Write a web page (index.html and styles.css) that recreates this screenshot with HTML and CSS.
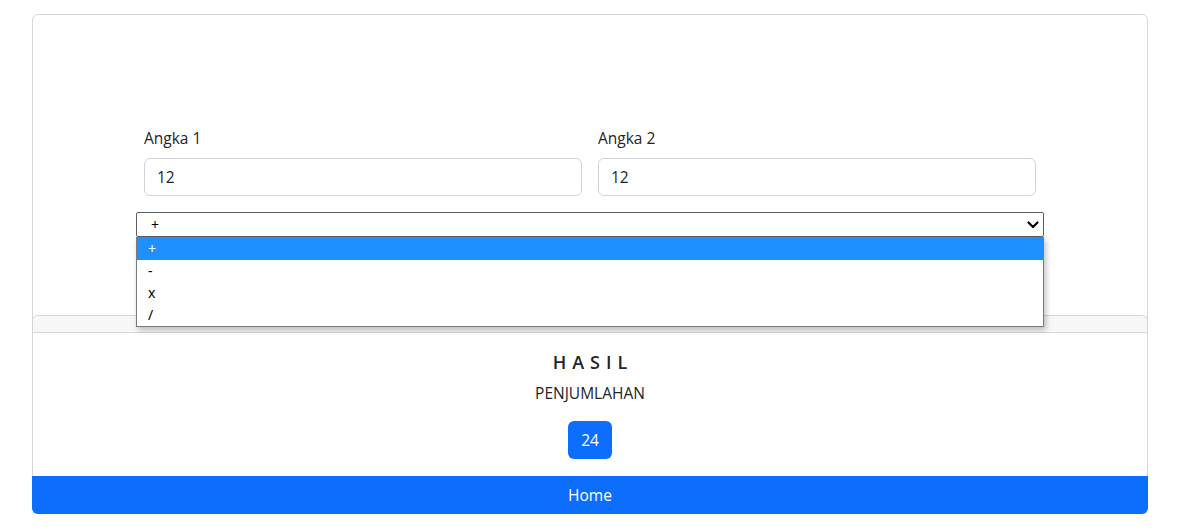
FILE: index.html
```html
<!DOCTYPE html>
<html lang="id">
<head>
<meta charset="utf-8">
<title>Kalkulator</title>
<link rel="stylesheet" href="styles.css">
</head>
<body>
<div class="page">
  <div class="card">
    <form class="calc">
      <div class="row">
        <div class="col">
          <label class="label" for="a1">Angka 1</label>
          <input class="input" id="a1" type="text" value="12">
        </div>
        <div class="col">
          <label class="label" for="a2">Angka 2</label>
          <input class="input" id="a2" type="text" value="12">
        </div>
      </div>
      <div class="select-wrap">
        <select class="select">
          <option>+</option>
          <option>-</option>
          <option>x</option>
          <option>/</option>
        </select>
        <svg class="chevron" width="12" height="8" viewBox="0 0 12 8"><path d="M1.5 1.5 L6 6 L10.5 1.5" fill="none" stroke="#000" stroke-width="2.2" stroke-linecap="round" stroke-linejoin="round"/></svg>
        <ul class="dropdown">
          <li class="opt active">+</li>
          <li class="opt">-</li>
          <li class="opt">x</li>
          <li class="opt">/</li>
        </ul>
      </div>
    </form>
    <div class="result">
      <div class="result-header"></div>
      <div class="result-body">
        <h5 class="title">HASIL</h5>
        <p class="op">PENJUMLAHAN</p>
        <span class="answer">24</span>
      </div>
    </div>
    <a class="home" href="#">Home</a>
  </div>
</div>
</body>
</html>
```

FILE: styles.css
```css
* { box-sizing: border-box; }
html, body { margin: 0; padding: 0; background: #fff; }
body {
  font-family: "Open Sans", "Noto Sans", Arial, sans-serif;
  font-size: 16px;
  line-height: 1.5;
  color: #212529;
}
.page { padding: 14px 32px 0 32px; }
.card {
  border: 1px solid #d6d6d6;
  border-radius: 6px;
  display: flex;
  flex-direction: column;
}
.calc { padding: 112px 103px 0 103px; }
.row { display: flex; }
.col { flex: 1 1 0; padding: 0 8px; }
.label { display: block; margin-bottom: 8px; font-size: 15.5px; }
.input {
  display: block;
  width: 100%;
  height: 38px;
  padding: 6px 12px;
  font: inherit;
  font-size: 15.5px;
  color: #212529;
  border: 1px solid #ced4da;
  border-radius: 6px;
  background: #fff;
}
.select-wrap { position: relative; margin-top: 16px; }
.select {
  display: block;
  width: 100%;
  height: 25px;
  appearance: none;
  -webkit-appearance: none;
  border: 1px solid #5f5f5f;
  border-radius: 2px;
  background: #fff;
  padding: 0 0 0 14px;
  font-family: "Noto Sans", Arial, sans-serif;
  font-size: 14px;
  color: #000;
}
.chevron { position: absolute; right: 5px; top: 9px; pointer-events: none; }
.dropdown {
  position: absolute;
  left: 0; right: 0; top: 25px;
  margin: 0; padding: 0;
  list-style: none;
  background: #fff;
  border: 1px solid #7a7a7a;
  box-shadow: 2px 3px 6px rgba(0,0,0,.25);
  z-index: 5;
  font-family: "Noto Sans", Arial, sans-serif;
  font-size: 14px;
  color: #000;
}
.opt { height: 22px; line-height: 22px; padding-left: 11px; }
.opt.active { background: #1e90ff; color: #fff; }
.result {
  margin-top: 78px;
  border: 1px solid #d6d6d6;
  border-radius: 6px 6px 0 0;
  margin-left: -1px;
  margin-right: -1px;
  border-bottom: 0;
}
.result-header {
  height: 17px;
  background: #f7f7f7;
  border-bottom: 1px solid #d6d6d6;
  border-radius: 6px 6px 0 0;
}
.result-body {
  padding: 16px 16px 17px 16px;
  display: flex;
  flex-direction: column;
  align-items: center;
}
.title {
  margin: 0;
  font-size: 18px;
  font-weight: 600;
  letter-spacing: 6px;
  margin-right: -6px;
  line-height: 26px;
}
.op { margin: 7px 0 0 0; font-size: 15.5px; line-height: 22px; }
.answer {
  margin-top: 17px;
  display: flex;
  align-items: center;
  justify-content: center;
  width: 44px;
  height: 38px;
  background: #0d6efd;
  color: #fff;
  border-radius: 6px;
  font-size: 15.5px;
}
.home {
  display: block;
  height: 38px;
  line-height: 38px;
  text-align: center;
  background: #0d6efd;
  color: #fff;
  text-decoration: none;
  border-radius: 0 0 6px 6px;
  margin: 0 -1px -1px -1px;
  font-size: 15.5px;
}
```
